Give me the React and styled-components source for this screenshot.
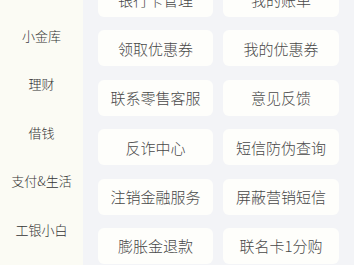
import React from "react";
import styled, { createGlobalStyle } from "styled-components";

const Global = createGlobalStyle`
  html, body { margin: 0; padding: 0; }
  body {
    font-family: "Noto Sans CJK SC", "Noto Sans", sans-serif;
    background: #f3f4f7;
    overflow: hidden;
  }
`;

const Page = styled.div`
  display: flex;
  width: 354px;
  height: 265px;
  overflow: hidden;
  background: #f3f4f7;
`;

const Sidebar = styled.nav`
  width: 83px;
  flex: none;
  background: #fbfbf4;
  display: flex;
  flex-direction: column;
  padding-top: 11.3px;
  box-sizing: border-box;
`;

const SideItem = styled.div`
  height: 48.4px;
  flex: none;
  display: flex;
  align-items: center;
  justify-content: center;
  font-size: 13px;
  font-weight: 300;
  color: #333333;
  white-space: nowrap;
`;

const Content = styled.main`
  flex: 1;
  padding: 0 15px 0 15px;
  overflow: hidden;
`;

const Grid = styled.div`
  display: grid;
  grid-template-columns: 115px 116px;
  column-gap: 10px;
  row-gap: 13.4px;
  margin-top: -19px;
`;

const Tile = styled.button`
  height: 36px;
  border: none;
  border-radius: 6px;
  background: #fefefb;
  color: #484848;
  font-family: inherit;
  font-size: 15px;
  font-weight: 300;
  padding: 0;
  display: flex;
  align-items: center;
  justify-content: center;
  white-space: nowrap;
`;

const sideItems = ["小金库", "理财", "借钱", "支付&生活", "工银小白"];
const tiles = [
  "银行卡管理",
  "我的账单",
  "领取优惠券",
  "我的优惠券",
  "联系零售客服",
  "意见反馈",
  "反诈中心",
  "短信防伪查询",
  "注销金融服务",
  "屏蔽营销短信",
  "膨胀金退款",
  "联名卡1分购",
];

export default function App() {
  return (
    <>
      <Global />
      <Page>
        <Sidebar>
          {sideItems.map((s) => (
            <SideItem key={s}>{s}</SideItem>
          ))}
        </Sidebar>
        <Content>
          <Grid>
            {tiles.map((t) => (
              <Tile key={t}>{t}</Tile>
            ))}
          </Grid>
        </Content>
      </Page>
    </>
  );
}
